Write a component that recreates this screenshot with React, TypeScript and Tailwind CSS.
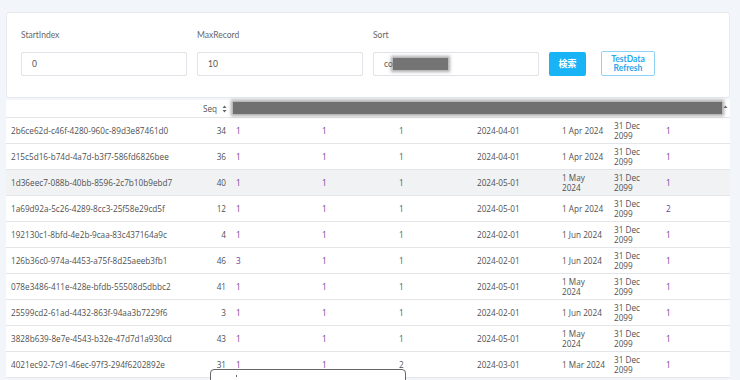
import React from 'react';

type Row = {
  id: string;
  seq: number;
  a: number;
  b: number;
  c: number;
  date: string;
  from: string[];
  to: string[];
  flag: number;
};

const rows: Row[] = [
  { id: '2b6ce62d-c46f-4280-960c-89d3e87461d0', seq: 34, a: 1, b: 1, c: 1, date: '2024-04-01', from: ['1 Apr 2024'], to: ['31 Dec', '2099'], flag: 1 },
  { id: '215c5d16-b74d-4a7d-b3f7-586fd6826bee', seq: 36, a: 1, b: 1, c: 1, date: '2024-04-01', from: ['1 Apr 2024'], to: ['31 Dec', '2099'], flag: 1 },
  { id: '1d36eec7-088b-40bb-8596-2c7b10b9ebd7', seq: 40, a: 1, b: 1, c: 1, date: '2024-05-01', from: ['1 May', '2024'], to: ['31 Dec', '2099'], flag: 1 },
  { id: '1a69d92a-5c26-4289-8cc3-25f58e29cd5f', seq: 12, a: 1, b: 1, c: 1, date: '2024-05-01', from: ['1 Apr 2024'], to: ['31 Dec', '2099'], flag: 2 },
  { id: '192130c1-8bfd-4e2b-9caa-83c437164a9c', seq: 4, a: 1, b: 1, c: 1, date: '2024-02-01', from: ['1 Jun 2024'], to: ['31 Dec', '2099'], flag: 1 },
  { id: '126b36c0-974a-4453-a75f-8d25aeeb3fb1', seq: 46, a: 3, b: 1, c: 1, date: '2024-02-01', from: ['1 Jun 2024'], to: ['31 Dec', '2099'], flag: 1 },
  { id: '078e3486-411e-428e-bfdb-55508d5dbbc2', seq: 41, a: 1, b: 1, c: 1, date: '2024-05-01', from: ['1 May', '2024'], to: ['31 Dec', '2099'], flag: 1 },
  { id: '25599cd2-61ad-4432-863f-94aa3b7229f6', seq: 3, a: 1, b: 1, c: 1, date: '2024-02-01', from: ['1 Jun 2024'], to: ['31 Dec', '2099'], flag: 1 },
  { id: '3828b639-8e7e-4543-b32e-47d7d1a930cd', seq: 43, a: 1, b: 1, c: 1, date: '2024-05-01', from: ['1 May', '2024'], to: ['31 Dec', '2099'], flag: 1 },
  { id: '4021ec92-7c91-46ec-97f3-294f6202892e', seq: 31, a: 1, b: 1, c: 2, date: '2024-03-01', from: ['1 Mar 2024'], to: ['31 Dec', '2099'], flag: 1 },
];

const cols = 'grid grid-cols-[200px_25px_86px_77px_78px_85px_52px_52px_1fr]';

function SortIcon() {
  return (
    <svg width="5" height="8" viewBox="0 0 5 8" className="ml-[5px]">
      <path d="M2.5 0.5 L4.5 3 H0.5 Z M2.5 7.5 L4.5 5 H0.5 Z" fill="#666" />
    </svg>
  );
}

function Field({ label, value, children }: { label: string; value: string; children?: React.ReactNode }) {
  return (
    <div className="w-[166px]">
      <div className="text-[8.5px] text-[#666] h-[11px] leading-[11px] mb-[11px]">{label}</div>
      <div className="h-[24px] border border-[#e0e3e7] rounded-[2px] bg-white flex items-center pl-[10px] text-[8.5px] text-[#555]">
        {value}
        {children}
      </div>
    </div>
  );
}

export default function App() {
  return (
    <div
      className="w-[740px] h-[380px] overflow-hidden bg-[#f2f5f9] relative"
      style={{ fontFamily: '"Open Sans", "Noto Sans CJK JP", sans-serif' }}
    >
      <div className="h-[12px]" />
      <div
        className="ml-[6px] w-[724px] h-[86px] bg-white border border-[#e6e9ee] rounded-[3px] flex pl-[14px] pt-[17px] gap-[10px]"
        style={{ fontFamily: 'Lato, "Noto Sans CJK JP", sans-serif' }}
      >
        <Field label="StartIndex" value="0" />
        <Field label="MaxRecord" value="10" />
        <Field label="Sort" value="co">
          <span className="inline-block w-[55px] h-[12px] bg-[#747474] shadow-[0_0_3px_2px_rgba(116,116,116,0.6)]" />
        </Field>
        <div className="flex items-start pt-[22px] gap-[15px]">
          <div className="w-[37px] h-[24px] rounded-[2px] bg-[#18b4f6] text-white text-[9px] font-bold flex items-center justify-center">
            検索
          </div>
          <div className="-mt-[1px] w-[54px] h-[25px] rounded-[2px] border border-[#8fd3f6] text-[#27a8ee] text-[8.5px] font-bold leading-[9px] flex flex-col items-center justify-center">
            <span>TestData</span>
            <span>Refresh</span>
          </div>
        </div>
      </div>

      <div className="mt-[2px] ml-[6px] w-[724px] bg-white text-[8.2px] leading-[10px]">
        <div className={`${cols} h-[18px] border-b border-[#e3e5e8] items-center text-[#555] font-medium`}>
          <div />
          <div className="col-span-1 flex items-center justify-end -ml-[20px] pr-[4px]">
            Seq
            <SortIcon />
          </div>
          <div className="col-span-7 relative h-full">
            <div className="absolute left-[2px] right-[8px] top-[2px] h-[12px] bg-[#707070] shadow-[0_0_3px_2px_rgba(112,112,112,0.6)]" />
            <div className="absolute right-[2px] top-[5px]">
              <svg width="5" height="8" viewBox="0 0 5 8">
                <path d="M2.5 0.5 L4.5 3 H0.5 Z" fill="#666" />
              </svg>
            </div>
          </div>
        </div>
        {rows.map((r, i) => (
          <div
            key={r.id}
            className={`${cols} h-[26px] items-center border-b border-[#e3e5e8] ${i === 2 ? 'bg-[#f1f2f4]' : ''}`}
          >
            <div className="pl-[5px] text-[#505050] whitespace-nowrap">{r.id}</div>
            <div className="text-right pr-[5px] text-[#505050]">{r.seq}</div>
            <div className="pl-[5px] text-[#6a3d9a]">{r.a}</div>
            <div className="pl-[5px] text-[#6a3d9a]">{r.b}</div>
            <div className="pl-[5px] text-[#555]">{r.c}</div>
            <div className="pl-[5px] text-[#505050]">{r.date}</div>
            <div className="pl-[5px] text-[#505050] whitespace-nowrap">
              {r.from.map((l) => (
                <div key={l}>{l}</div>
              ))}
            </div>
            <div className="pl-[5px] text-[#505050] whitespace-nowrap">
              {r.to.map((l) => (
                <div key={l}>{l}</div>
              ))}
            </div>
            <div className="pl-[5px] text-[#6a3d9a]">{r.flag}</div>
          </div>
        ))}
      </div>

      <div className="absolute left-[210px] top-[369px] w-[196px] h-[20px] bg-white border border-[#666] rounded-t-[4px]">
        <div className="absolute left-[25px] top-[5px] w-[1px] h-[2px] bg-[#666]" />
      </div>
    </div>
  );
}
